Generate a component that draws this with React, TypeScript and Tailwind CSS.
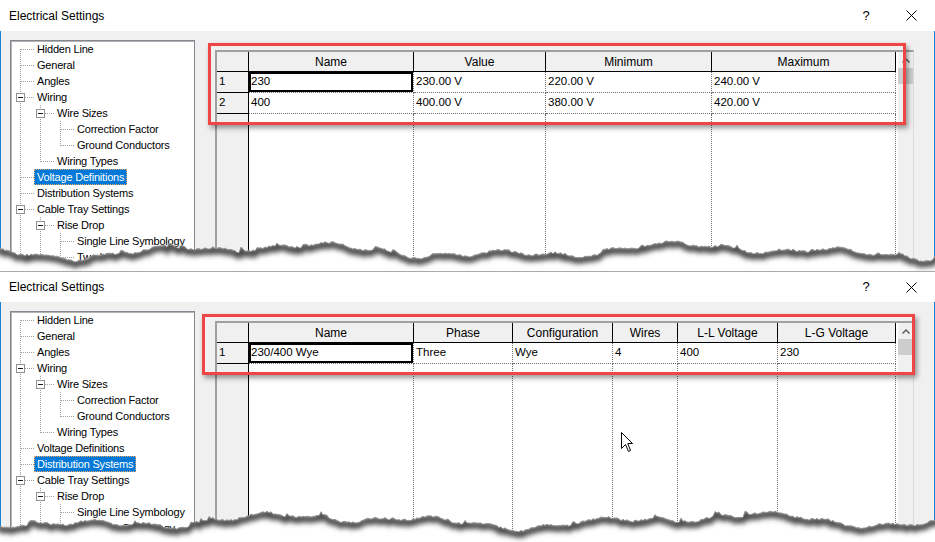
import React from "react";

type TreeItem = { label: string; level: number; expanded?: boolean };

const treeItems: TreeItem[] = [
  { label: "Hidden Line", level: 0 },
  { label: "General", level: 0 },
  { label: "Angles", level: 0 },
  { label: "Wiring", level: 0, expanded: true },
  { label: "Wire Sizes", level: 1, expanded: true },
  { label: "Correction Factor", level: 2 },
  { label: "Ground Conductors", level: 2 },
  { label: "Wiring Types", level: 1 },
  { label: "Voltage Definitions", level: 0 },
  { label: "Distribution Systems", level: 0 },
  { label: "Cable Tray Settings", level: 0, expanded: true },
  { label: "Rise Drop", level: 1, expanded: true },
  { label: "Single Line Symbology", level: 2 },
  { label: "Two Line Symbology", level: 2 },
  // below the tear, only used so the connector lines keep going
  { label: "Size", level: 1 },
  { label: "Conduit Settings", level: 0 },
];

const VISIBLE_ROWS = 14;

function hasNextSibling(i: number) {
  const lvl = treeItems[i].level;
  for (let j = i + 1; j < treeItems.length; j++) {
    if (treeItems[j].level < lvl) return false;
    if (treeItems[j].level === lvl) return true;
  }
  return false;
}

function ancestorAt(i: number, lvl: number) {
  for (let k = i - 1; k >= 0; k--) if (treeItems[k].level === lvl) return k;
  return 0;
}

function TreeRow({ index, item, selected }: { index: number; item: TreeItem; selected: boolean }) {
  const lvl = item.level;
  const c = 9 + 20 * lvl;
  const dots = { stroke: "#a0a0a0", strokeWidth: 1, strokeDasharray: "1 1" };
  const lines: React.ReactNode[] = [];
  for (let a = 0; a < lvl; a++) {
    if (hasNextSibling(ancestorAt(index, a))) {
      const x = 9 + 20 * a + 0.5;
      lines.push(<line key={"a" + a} x1={x} y1={0} x2={x} y2={16} {...dots} />);
    }
  }
  const top = index === 0 ? 8 : 0;
  const bottom = hasNextSibling(index) ? 16 : 9;
  return (
    <div className="flex h-[16px] items-center">
      <svg width={23 + 20 * lvl} height={16} className="shrink-0">
        {lines}
        <line x1={c + 0.5} y1={top} x2={c + 0.5} y2={bottom} {...dots} />
        <line x1={c + 1} y1={8.5} x2={c + 15} y2={8.5} {...dots} />
        {item.expanded && (
          <g>
            <rect x={c - 3.5} y={4.5} width={8} height={8} fill="#fff" stroke="#919191" />
            <line x1={c - 2} y1={8.5} x2={c + 3} y2={8.5} stroke="#1a1a1a" />
          </g>
        )}
      </svg>
      <span
        className={
          selected
            ? "h-[16px] whitespace-nowrap border border-dotted border-[#e8a868] bg-[#0078d7] px-[2px] leading-[14px] text-white"
            : "h-[16px] whitespace-nowrap border border-transparent px-[2px] leading-[14px] text-black"
        }
      >
        {item.label}
      </span>
    </div>
  );
}

function Tree({ selected }: { selected: string }) {
  return (
    <div className="mt-[9px] h-[400px] w-[185px] shrink-0 overflow-hidden border border-[#828790] bg-white text-[11px] tracking-[-0.2px] shadow-[inset_1px_1px_0_#b4b4b4]">
      {treeItems.slice(0, VISIBLE_ROWS).map((item, i) => (
        <TreeRow key={i} index={i} item={item} selected={item.label === selected} />
      ))}
    </div>
  );
}

type Column = { title: string; width: number };

function Grid({ columns, rows }: { columns: Column[]; rows: string[][] }) {
  return (
    <div className="mt-[19px] flex h-[400px] w-[699px] shrink-0 border-t-2 border-r border-l-2 border-t-[#a0a0a0] border-r-[#dadada] border-l-[#a0a0a0] bg-white">
      <div className="flex w-[679px] flex-col">
        <div className="flex h-[20px] shrink-0 bg-[#f0f0f0] text-[12px] text-black">
          <div className="w-[32px] shrink-0 border-r border-b border-black" />
          {columns.map((col) => (
            <div
              key={col.title}
              className="flex shrink-0 items-center justify-center border-r border-b border-black"
              style={{ width: col.width }}
            >
              {col.title}
            </div>
          ))}
        </div>
        {rows.map((row, r) => (
          <div key={r} className="flex h-[21px] shrink-0 text-[11.5px] text-black">
            <div className="flex w-[32px] shrink-0 items-center border-r border-b border-black bg-[#f0f0f0] pl-[2px]">
              {row[0]}
            </div>
            {columns.map((col, c) => (
              <div
                key={col.title}
                className={
                  c === 0 && r === 0
                    ? "flex shrink-0 items-center border-r border-b border-dotted border-[#6e6e6e] pl-[2px] shadow-[inset_0_0_0_2px_#000]"
                    : "flex shrink-0 items-center border-r border-b border-dotted border-[#6e6e6e] pl-[2px]"
                }
                style={{ width: col.width }}
              >
                {row[c + 1]}
              </div>
            ))}
          </div>
        ))}
        <div className="flex flex-1">
          <div className="w-[32px] shrink-0 border-r border-black bg-[#f0f0f0]" />
          {columns.map((col) => (
            <div
              key={col.title}
              className="shrink-0 border-r border-dotted border-[#6e6e6e]"
              style={{ width: col.width }}
            />
          ))}
        </div>
      </div>
      <div className="flex w-[17px] shrink-0 flex-col border-l-2 border-white bg-[#f0f0f0]">
        <div className="flex h-[16px] items-center justify-center">
          <svg width="8" height="5">
            <polyline points="0.5,4.5 4,1 7.5,4.5" fill="none" stroke="#606060" strokeWidth="1.5" />
          </svg>
        </div>
        <div className="h-[16px] bg-[#cdcdcd]" />
      </div>
    </div>
  );
}

function jag(seed: number, base: number, amp: number) {
  let s = seed;
  const rnd = () => {
    s = (s * 16807) % 2147483647;
    return s / 2147483647;
  };
  const p1 = rnd() * 6;
  const p2 = rnd() * 6;
  const p3 = rnd() * 6;
  const pts: [number, number][] = [];
  let spike = 0;
  for (let x = -3; x <= 940; x += 2) {
    if (rnd() < 0.04) spike = -(2 + rnd() * 5);
    spike *= 0.7;
    const y =
      base +
      amp * (0.45 * Math.sin(x / 67 + p1) + 0.35 * Math.sin(x / 27 + p2) + 0.2 * Math.sin(x / 9 + p3)) +
      (rnd() - 0.5) * 2.2 +
      spike;
    pts.push([x, y]);
  }
  return pts;
}

function TornEdge({ seed, base, amp }: { seed: number; base: number; amp: number }) {
  const pts = jag(seed, base, amp);
  const line = pts.map(([x, y]) => `${x},${y.toFixed(1)}`).join(" ");
  const below = `${line} 940,60 -3,60`;
  const shadow = pts.map(([x, y]) => `${x},${(y + 2.5).toFixed(1)}`).join(" ");
  const id = `torn${seed}`;
  return (
    <svg className="pointer-events-none absolute bottom-0 left-0" width="935" height="42" viewBox="0 0 935 42">
      <defs>
        <clipPath id={`${id}c`}>
          <polygon points={below} />
        </clipPath>
        <filter id={`${id}f`} x="-5%" y="-50%" width="110%" height="200%">
          <feGaussianBlur stdDeviation="2.4" />
        </filter>
      </defs>
      <polygon points={below} fill="#fff" />
      <g clipPath={`url(#${id}c)`}>
        <polyline points={shadow} fill="none" stroke="#4a4a4a" strokeWidth="7" filter={`url(#${id}f)`} />
      </g>
      <polyline points={line} fill="none" stroke="#8a8a8a" strokeWidth="0.8" />
    </svg>
  );
}

function Dialog({
  selected,
  columns,
  rows,
  topBorder,
}: {
  selected: string;
  columns: Column[];
  rows: string[][];
  topBorder: boolean;
}) {
  return (
    <div className="flex w-[935px] flex-col">
      <div
        className={
          topBorder
            ? "flex h-[31px] shrink-0 items-center border-t border-[#aaaaaa] bg-white pr-[1px] pl-[9px] text-[12px] text-black"
            : "flex h-[31px] shrink-0 items-center bg-white pr-[1px] pl-[9px] text-[12px] text-black"
        }
      >
        <span>Electrical Settings</span>
        <span className="ml-auto w-[30px] text-center text-[13px]">?</span>
        <span className="ml-[7px] flex w-[46px] justify-center">
          <svg width="11" height="11">
            <line x1="0.5" y1="0.5" x2="10.5" y2="10.5" stroke="#000" />
            <line x1="10.5" y1="0.5" x2="0.5" y2="10.5" stroke="#000" />
          </svg>
        </span>
      </div>
      <div className="flex h-[400px] items-start border-x border-[#1883d7] bg-[#f0f0f0] pl-[9px]">
        <Tree selected={selected} />
        <div className="w-[20px] shrink-0" />
        <Grid columns={columns} rows={rows} />
      </div>
    </div>
  );
}

export default function App() {
  return (
    <div className="h-[542px] w-[935px] overflow-hidden bg-white font-['Liberation_Sans',Arial,sans-serif]">
      <div className="relative h-[271px] overflow-hidden">
        <Dialog
          topBorder={false}
          selected="Voltage Definitions"
          columns={[
            { title: "Name", width: 165 },
            { title: "Value", width: 132 },
            { title: "Minimum", width: 166 },
            { title: "Maximum", width: 184 },
          ]}
          rows={[
            ["1", "230", "230.00 V", "220.00 V", "240.00 V"],
            ["2", "400", "400.00 V", "380.00 V", "420.00 V"],
          ]}
        />
        <div className="absolute top-[43px] left-[208px] h-[82px] w-[698px] border-[3px] border-[#f04545] shadow-[2px_3px_5px_rgba(0,0,0,0.4)]" />
        <TornEdge seed={12345} base={22} amp={10} />
      </div>
      <div className="relative h-[271px] overflow-hidden">
        <Dialog
          topBorder={true}
          selected="Distribution Systems"
          columns={[
            { title: "Name", width: 165 },
            { title: "Phase", width: 99 },
            { title: "Configuration", width: 100 },
            { title: "Wires", width: 65 },
            { title: "L-L Voltage", width: 100 },
            { title: "L-G Voltage", width: 118 },
          ]}
          rows={[["1", "230/400 Wye", "Three", "Wye", "4", "400", "230"]]}
        />
        <div className="absolute top-[43px] left-[202px] h-[61px] w-[713px] border-[3px] border-[#f04545] shadow-[2px_3px_5px_rgba(0,0,0,0.4)]" />
        <svg className="absolute top-[161px] left-[621px]" width="13" height="21" viewBox="0 0 13 21">
          <path d="M0.5 0.5 L0.5 16.5 L4.5 12.5 L7.5 19.5 L9.5 18.5 L6.8 11.5 L11.5 11.5 Z" fill="#fff" stroke="#000" strokeWidth="1" strokeLinejoin="round" />
        </svg>
        <TornEdge seed={777} base={21} amp={10} />
      </div>
    </div>
  );
}
